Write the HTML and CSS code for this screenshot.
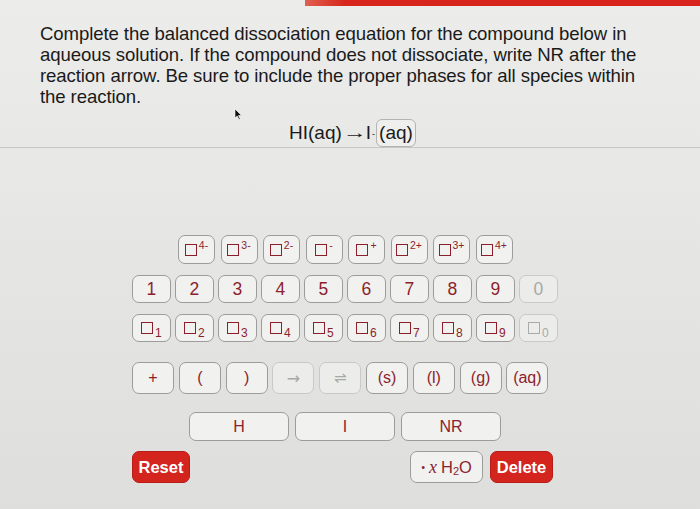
FILE: index.html
```html
<!DOCTYPE html>
<html>
<head>
<meta charset="utf-8">
<link rel="stylesheet" href="styles.css">
</head>
<body>
<div class="page">
  <div class="topbar"></div>
  <p class="prompt">Complete the balanced dissociation equation for the compound below in aqueous solution. If the compound does not dissociate, write NR after the reaction arrow. Be sure to include the proper phases for all species within the reaction.</p>
  <svg class="cursor" width="8" height="12" viewBox="0 0 8 12"><path d="M1 1 L1 10 L3.2 8 L5 11.5 L6.2 11 L4.5 7.5 L7.5 7.5 Z" fill="#111" stroke="#fff" stroke-width="0.6"/></svg>
  <div class="equation">HI(aq)<span class="arrow">&#8594;</span>I<span class="chg">-</span><span class="slot">(aq)</span></div>
  <div class="rule"></div>

  <div class="keypad">
    <div class="row row-charges">
      <button class="key key-c"><span class="sq"></span><sup>4-</sup></button>
      <button class="key key-c"><span class="sq"></span><sup>3-</sup></button>
      <button class="key key-c"><span class="sq"></span><sup>2-</sup></button>
      <button class="key key-c"><span class="sq"></span><sup>-</sup></button>
      <button class="key key-c"><span class="sq"></span><sup>+</sup></button>
      <button class="key key-c"><span class="sq"></span><sup>2+</sup></button>
      <button class="key key-c"><span class="sq"></span><sup>3+</sup></button>
      <button class="key key-c"><span class="sq"></span><sup>4+</sup></button>
    </div>
    <div class="row row-digits">
      <button class="key key-d">1</button>
      <button class="key key-d">2</button>
      <button class="key key-d">3</button>
      <button class="key key-d">4</button>
      <button class="key key-d">5</button>
      <button class="key key-d">6</button>
      <button class="key key-d">7</button>
      <button class="key key-d">8</button>
      <button class="key key-d">9</button>
      <button class="key key-d off">0</button>
    </div>
    <div class="row row-digits">
      <button class="key key-d"><span class="sq"></span><sub>1</sub></button>
      <button class="key key-d"><span class="sq"></span><sub>2</sub></button>
      <button class="key key-d"><span class="sq"></span><sub>3</sub></button>
      <button class="key key-d"><span class="sq"></span><sub>4</sub></button>
      <button class="key key-d"><span class="sq"></span><sub>5</sub></button>
      <button class="key key-d"><span class="sq"></span><sub>6</sub></button>
      <button class="key key-d"><span class="sq"></span><sub>7</sub></button>
      <button class="key key-d"><span class="sq"></span><sub>8</sub></button>
      <button class="key key-d"><span class="sq"></span><sub>9</sub></button>
      <button class="key key-d off"><span class="sq"></span><sub>0</sub></button>
    </div>
    <div class="row row-sym">
      <button class="key key-s">+</button>
      <button class="key key-s">(</button>
      <button class="key key-s">)</button>
      <button class="key key-s off ar">&#8594;</button>
      <button class="key key-s off eq">&#8652;</button>
      <button class="key key-s">(s)</button>
      <button class="key key-s">(l)</button>
      <button class="key key-s">(g)</button>
      <button class="key key-s">(aq)</button>
    </div>
    <div class="row row-el">
      <button class="key key-w">H</button>
      <button class="key key-w">I</button>
      <button class="key key-w">NR</button>
    </div>
    <div class="row row-act">
      <button class="key red reset">Reset</button>
      <div class="act-right">
        <button class="key water"><span class="dot">&#8226;</span><i class="xv">x</i> H<sub>2</sub>O</button>
        <button class="key red del">Delete</button>
      </div>
    </div>
  </div>
</div>
</body>
</html>
```
FILE: styles.css
```css
html, body {
  margin: 0;
  padding: 0;
}
body {
  width: 700px;
  height: 509px;
  overflow: hidden;
  background: linear-gradient(180deg, #ececea 0%, #e6e6e4 45%, #dededc 100%);
  font-family: "Liberation Sans", Arial, sans-serif;
}
.page {
  position: relative;
  height: 509px;
}
.topbar {
  margin-left: 305px;
  height: 6px;
  background: linear-gradient(90deg, #e06050 0%, #d8261c 10%, #d8241c 100%);
}
.prompt {
  margin: 17px 0 0 40px;
  width: 610px;
  font-size: 18.6px;
  line-height: 21px;
  color: #1a1a1a;
  letter-spacing: -0.1px;
}
.cursor {
  position: absolute;
  left: 234px;
  top: 108px;
}
.equation {
  margin: 13px 0 0 289px;
  height: 26px;
  font-size: 19px;
  line-height: 26px;
  color: #1a1a1a;
  display: flex;
  align-items: center;
}
.arrow {
  font-size: 16px;
  line-height: 26px;
  margin: 0 3px 0 5px;
  transform: scaleX(1.5);
}
.chg {
  font-size: 9px;
  align-self: flex-start;
  margin-top: 1px;
  margin-left: 1px;
}
.slot {
  border: 1px solid #b4b4b4;
  border-radius: 6px;
  padding: 0 2px;
  background: #efefed;
  margin-left: 1px;
}
.rule {
  margin-top: 1px;
  height: 1px;
  background: #c6c6c4;
}
.keypad {
  margin: 87px 0 0 132px;
  display: flex;
  flex-direction: column;
}
.row {
  display: flex;
}
.key {
  margin: 0;
  padding: 0;
  box-sizing: border-box;
  background: #f1f1ef;
  border: 1px solid #9c9c9a;
  border-radius: 7px;
  color: #8c1f2c;
  font-family: "Liberation Sans", Arial, sans-serif;
  display: flex;
  align-items: center;
  justify-content: center;
}
.key.off {
  color: #a8a8a8;
  border-color: #c9c9c7;
  background: #ececea;
}
.key.off .sq {
  border-color: #aaaaaa;
}
.sq {
  display: inline-block;
  width: 12px;
  height: 12px;
  border: 1px solid #8c1f2c;
  box-sizing: border-box;
}
.row-charges {
  margin-left: 46px;
  gap: 5.5px;
}
.key-c {
  width: 37px;
  height: 29px;
  font-size: 10px;
}
.key-c sup {
  font-size: 10.5px;
  vertical-align: 0;
  position: relative;
  top: -5px;
  margin-left: 2px;
}
.row-digits {
  gap: 4.5px;
  margin-top: 11px;
}
.key-d {
  width: 38.5px;
  height: 28px;
  font-size: 17.5px;
}
.key-d sub {
  font-size: 12px;
  vertical-align: 0;
  position: relative;
  top: 5px;
  margin-left: 2px;
}
.row-sym {
  gap: 4.8px;
  margin-top: 20px;
}
.key-s {
  width: 42px;
  height: 32px;
  font-size: 16px;
}
.key-s.ar {
  font-family: "DejaVu Sans", sans-serif;
  font-size: 16px;
}
.key-s.eq {
  font-family: "DejaVu Sans", sans-serif;
  font-size: 15px;
}
.row-el {
  margin: 18px 0 0 57px;
  gap: 6px;
}
.key-w {
  width: 100px;
  height: 29px;
  font-size: 16px;
}
.row-act {
  margin-top: 10px;
  width: 421px;
  justify-content: space-between;
}
.act-right {
  display: flex;
  gap: 7px;
}
.red {
  background: #d3241e;
  border-color: #b81c18;
  color: #ffffff;
  font-weight: bold;
  font-size: 16.5px;
  height: 32px;
}
.reset {
  width: 58px;
}
.del {
  width: 63px;
}
.water {
  width: 73px;
  height: 32px;
  font-size: 16.5px;
}
.water .dot {
  font-size: 11px;
  margin-right: 4px;
}
.water .xv {
  font-family: "Liberation Serif", "Times New Roman", serif;
  font-size: 18px;
  margin-right: 4px;
}
.water sub {
  font-size: 11px;
  vertical-align: 0;
  position: relative;
  top: 4px;
}
```
